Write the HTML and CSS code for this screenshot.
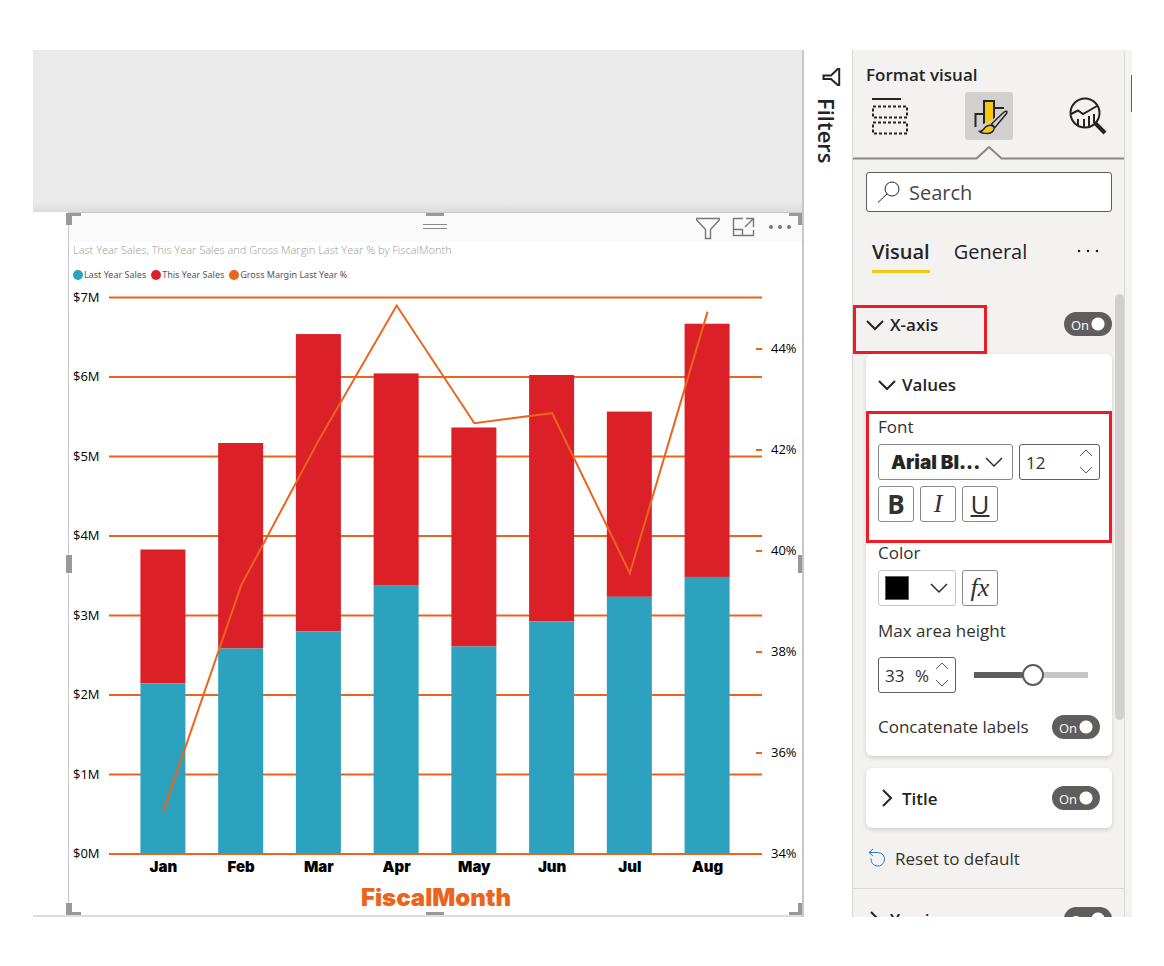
FILE: index.html
```html
<!DOCTYPE html>
<html lang="en">
<head>
    <meta charset="UTF-8">
    <meta name="viewport" content="width=device-width, initial-scale=1.0">
    <title>Format visual</title>
    <link rel="stylesheet" href="styles.css">
</head>
<body>

    <div class="workspace">
        <main class="canvas">
            <div class="backdrop"></div>
            <div class="report">
                <section class="visual">
                    <span class="handle top-left"></span>
                    <span class="handle top"></span>
                    <span class="handle top-right"></span>
                    <span class="handle left"></span>
                    <span class="handle right"></span>
                    <span class="handle bottom-left"></span>
                    <span class="handle bottom"></span>
                    <span class="handle bottom-right"></span>

                    <header class="visual-header">
                        <span class="grip"></span>
                        <div class="visual-actions">
                            <button aria-label="Filters">
                                <svg width="24" height="24" viewBox="0 0 24 24"><path d="M.7 2.500h22.600v1.500l-8.800 9.500v9h-5v-9L.7 4z"/></svg>
                            </button>
                            <button aria-label="Focus mode">
                                <svg width="24" height="22" viewBox="0 0 24 22"><path d="M11 1.500H1.500V18.500H21.500V13M21.500 10V1.500H14M1.500 12.500H10.500V18.500M13 10L21 2"/></svg>
                            </button>
                            <button aria-label="More options">
                                <svg class="dots" width="24" height="6" viewBox="0 0 24 6"><circle cx="3" cy="2" r="2"/><circle cx="12" cy="2" r="2"/><circle cx="21" cy="2" r="2"/></svg>
                            </button>
                        </div>
                    </header>

                    <h1 class="chart-title">Last Year Sales, This Year Sales and Gross Margin Last Year % by FiscalMonth</h1>
                    <ul class="legend">
                        <li><span class="dot last-year"></span>Last Year Sales</li>
                        <li><span class="dot this-year"></span>This Year Sales</li>
                        <li><span class="dot margin"></span>Gross Margin Last Year %</li>
                    </ul>
                    <svg id="chart" class="chart" viewBox="0 0 733 627" role="img" aria-label="Sales by FiscalMonth"></svg>
                </section>
            </div>
        </main>

        <aside class="filters">
            <button class="filters-toggle">
                <svg width="20" height="20" viewBox="0 0 20 20"><path d="M18.200 2v16h-1.500l-6.700-6H2.500V8.500H10L16.700 2z"/></svg>
                <span>Filters</span>
            </button>
        </aside>

        <aside class="pane">
            <div class="pane-body">
                <h2>Format visual</h2>
                <div class="modes">
                    <button class="mode" aria-label="Build visual">
                        <svg width="40" height="40" viewBox="0 0 40 40" fill="none" stroke="#252423" stroke-width="2"><path d="M2 3H31"/><path stroke-dasharray="3 2" d="M3 10.500H37V21.500H3zM3 26.500H37V37.500H3z"/></svg>
                    </button>
                    <button class="mode active" aria-label="Format visual">
                        <svg width="40" height="40" viewBox="0 0 40 40">
                            <path d="M6.500 31V18H15M25 12H35" fill="none" stroke-width="2"/>
                            <path fill="#f2c811" stroke-width="2" d="M15 33V5H25V33z"/>
                            <path fill="#d2d0ce" stroke="#d2d0ce" stroke-width="5" d="M37 16L22 28L16 30L11 35L18 37L25 34L38 17z"/>
                            <path fill="#d2d0ce" stroke-width="1.500" d="M22.500 28L34.500 16.500C36.500 15 39 14.500 37.500 17.500L26 31.500z"/>
                            <path fill="#f2c811" stroke-width="1.500" d="M10.500 35.500C14 35.500 14.500 33 16.500 31C19 28.500 23 28.500 25 31C26 34 23 37.500 18.500 37.500C15 37.500 12 37 10.500 35.500z"/>
                        </svg>
                    </button>
                    <button class="mode" aria-label="Analytics">
                        <svg width="40" height="40" viewBox="0 0 40 40" stroke-width="2"><circle cx="17" cy="17" r="14.500"/><path d="M3 18L10 14.500L15 18L29 10M10 29V23M16 31V23M21 31V20M26 27V18"/><path stroke-width="4" d="M27 27L37 37"/></svg>
                    </button>
                </div>
                <svg class="notch" viewBox="0 0 271 14" preserveAspectRatio="xMidYMid slice"><path d="M-400 12.500H123.500L136 1L148.500 12.500H700"/></svg>

                <label class="search">
                    <svg width="24" height="24" viewBox="0 0 24 24"><circle cx="15" cy="9" r="7"/><path d="M10 14L1 22.500"/></svg>
                    <input type="text" placeholder="Search" aria-label="Search">
                </label>

                <nav class="tabs">
                    <a href="#visual" class="active">Visual</a>
                    <a href="#general">General</a>
                    <button aria-label="More"><svg class="dots" width="24" height="4" viewBox="0 0 24 4"><circle cx="2" cy="2" r="1.300"/><circle cx="11" cy="2" r="1.300"/><circle cx="20" cy="2" r="1.300"/></svg></button>
                </nav>

                <div class="section-row">
                    <button class="section-title marked">
                        <svg class="chevron" viewBox="0 0 18 18"><path d="M1 5L9 13L17 5"/></svg>X-axis
                    </button>
                    <label class="switch"><input type="checkbox" checked aria-label="X-axis"><span>On</span></label>
                </div>

                <div class="card values">
                    <button class="card-title">
                        <svg class="chevron" viewBox="0 0 18 18"><path d="M1 5L9 13L17 5"/></svg>Values
                    </button>
                    <div class="font-group">
                        <label for="font">Font</label>
                        <div class="controls">
                            <div class="select-box">
                                <select id="font"><option>Arial Bl...</option></select>
                                <svg class="chevron thin" viewBox="0 0 18 18"><path d="M1 5L9 13L17 5"/></svg>
                            </div>
                            <div class="spin size">
                                <input type="text" value="12" aria-label="Font size">
                                <svg width="14" height="28" viewBox="0 0 14 28"><path d="M1 8L7 2L13 8M1 19L7 25L13 19"/></svg>
                            </div>
                        </div>
                        <div class="controls">
                            <button class="square bold">B</button>
                            <button class="square italic">I</button>
                            <button class="square underline">U</button>
                        </div>
                    </div>
                    <div class="field">
                        <label for="color">Color</label>
                        <div class="controls">
                            <button id="color" class="color">
                                <span class="swatch"></span>
                                <svg class="chevron thin" viewBox="0 0 18 18"><path d="M1 5L9 13L17 5"/></svg>
                            </button>
                            <button class="square fx">fx</button>
                        </div>
                    </div>
                    <div class="field area">
                        <label for="area">Max area height</label>
                        <div class="controls">
                            <div class="spin percent">
                                <input id="area" type="text" value="33"><span>%</span>
                                <svg width="14" height="28" viewBox="0 0 14 28"><path d="M1 8L7 2L13 8M1 19L7 25L13 19"/></svg>
                            </div>
                            <input class="slider" type="range" min="0" max="100" value="52" aria-label="Max area height">
                        </div>
                    </div>
                    <div class="switch-row">
                        <label for="concat">Concatenate labels</label>
                        <label class="switch"><input id="concat" type="checkbox" checked><span>On</span></label>
                    </div>
                </div>

                <div class="card title-card">
                    <button class="card-title">
                        <svg class="chevron" viewBox="0 0 18 18"><path d="M5 1L13 9L5 17"/></svg>Title
                    </button>
                    <label class="switch"><input type="checkbox" checked aria-label="Title"><span>On</span></label>
                </div>

                <button class="reset">
                    <svg width="18" height="20" viewBox="0 0 18 20"><path d="M5 1L1 4.500L5 8M1 4.500H10.500A6.800 6.800 0 1 1 3 10.500"/></svg>
                    Reset to default
                </button>

                <div class="section-row next">
                    <button class="section-title">
                        <svg class="chevron" viewBox="0 0 18 18"><path d="M5 1L13 9L5 17"/></svg>Y-axis
                    </button>
                    <label class="switch"><input type="checkbox" checked aria-label="Y-axis"><span>On</span></label>
                </div>
                <span class="scroll-thumb"></span>
            </div>
            <span class="edge-thumb"></span>
        </aside>
    </div>

    <script src="chart.js"></script>
</body>
</html>
```
FILE: styles.css
```css
* {
    box-sizing: border-box;
}

body {
    margin: 0;
    background: #fff;
    color: #252423;
    font-family: "Open Sans", "Noto Sans", sans-serif;
    font-size: 17px;
}

button {
    padding: 0;
    border: none;
    background: none;
    color: inherit;
    font: inherit;
    cursor: pointer;
}

svg {
    display: block;
    flex: none;
    fill: none;
    stroke: #252423;
}

.workspace {
    display: flex;
    height: calc(100vh - 99px);
    margin: 50px 32px 0 33px;
    overflow: hidden;
}

/* report canvas */
.canvas {
    display: flex;
    flex: 1;
    flex-direction: column;
    min-width: 0;
    border-right: 2px solid #c8c8c8;
}

.backdrop {
    height: 162px;
    background: linear-gradient(#eaeaea 94%, #dcdcdc);
}

.report {
    flex: 1;
    padding-left: 35px;
    border-bottom: 2px solid #dcdcdc;
}

.visual {
    position: relative;
    height: 100%;
    border-top: 1px solid #c8c8c8;
    border-left: 1px solid #c8c8c8;
}

.visual-header {
    position: relative;
    display: flex;
    justify-content: flex-end;
    height: 29px;
    padding-right: 10px;
    background: #fafafa;
}

.grip {
    position: absolute;
    top: 11px;
    left: calc(50% - 13px);
    width: 24px;
    height: 5px;
    border-top: 1px solid #888;
    border-bottom: 1px solid #888;
}

.visual-actions {
    display: flex;
    align-items: center;
    gap: 12px;
}

.visual-actions svg {
    stroke: #777;
    stroke-width: 1.4;
}

.visual-actions .dots {
    fill: #777;
    stroke: none;
}

.handle {
    position: absolute;
    z-index: 1;
    border: 0 solid #999;
}

.top-left, .top-right, .bottom-left, .bottom-right {
    width: 13px;
    height: 12px;
}

.top-left, .bottom-left {
    left: -3px;
    width: 15px;
    border-left-width: 6px;
}

.top-right, .bottom-right {
    right: 0;
    border-right-width: 4px;
}

.top-left, .top-right {
    top: 0;
    border-top-width: 3px;
}

.bottom-left, .bottom-right {
    bottom: 0;
    border-bottom-width: 3px;
}

.top, .bottom {
    left: calc(50% - 10px);
    width: 18px;
    border-top-width: 3px;
}

.top {
    top: 0;
}

.bottom {
    bottom: 0;
}

.left, .right {
    top: calc(50% - 9px);
    height: 18px;
}

.left {
    left: -3px;
    border-left-width: 6px;
}

.right {
    right: 0;
    border-right-width: 4px;
}

.chart-title {
    margin: 0;
    padding-left: 4px;
    color: #999;
    font-size: 11px;
    font-weight: 300;
    line-height: 16px;
}

.legend {
    display: flex;
    gap: 5px;
    margin: 0;
    padding: 10px 0 4px 4px;
    color: #555;
    font-family: "Noto Sans", sans-serif;
    font-size: 9px;
    line-height: 14px;
    list-style: none;
}

.legend li {
    display: flex;
    align-items: center;
    gap: 1px;
}

.dot {
    width: 10px;
    height: 10px;
    border-radius: 50%;
}

.last-year {
    background: #2ca2bf;
}

.this-year {
    background: #db2028;
}

.margin {
    background: #eb641c;
}

.chart {
    width: 100%;
}

.chart text {
    fill: #000;
    stroke: none;
    font-size: 13px;
}

.chart .grid {
    stroke: #eb641c;
    stroke-width: 2;
}

.chart .bar-last {
    fill: #2ca2bf;
    stroke: none;
}

.chart .bar-this {
    fill: #db2028;
    stroke: none;
}

.chart .line {
    stroke: #eb641c;
    stroke-width: 2;
}

.chart .month {
    font-family: Inter, sans-serif;
    font-size: 15px;
    font-weight: 900;
    text-anchor: middle;
}

.chart .axis-title {
    fill: #eb641c;
    font-family: Inter, sans-serif;
    font-size: 24px;
    font-weight: 900;
    text-anchor: middle;
}

/* collapsed filters pane */
.filters {
    width: 48px;
    padding: 17px 0 0 8px;
}

.filters-toggle {
    display: flex;
    flex-direction: column;
    align-items: center;
    gap: 11px;
}

.filters-toggle svg {
    margin-left: 8px;
    stroke-width: 2;
}

.filters-toggle span {
    font-size: 22px;
    font-weight: 600;
    line-height: 30px;
    writing-mode: vertical-rl;
}

/* format pane */
.pane {
    position: relative;
    width: 280px;
    padding-right: 7px;
    border-left: 1px solid #d8d8d8;
    background: #f3f2f1;
}

.pane-body {
    position: relative;
    height: 100%;
    border-right: 1px solid #d8d8d8;
    overflow: hidden;
}

.pane h2 {
    margin: 0;
    padding: 13px 13px 5px;
    font-size: 17px;
    font-weight: 600;
    line-height: 24px;
}

.modes {
    display: flex;
    justify-content: space-between;
    padding: 0 12px 0 13px;
}

.mode {
    display: flex;
    align-items: center;
    justify-content: center;
    width: 48px;
    height: 48px;
    border-radius: 3px;
}

.mode.active {
    background: #d2d0ce;
}

.notch {
    width: 100%;
    height: 14px;
    margin: 6px 0 12px;
    stroke: #8a8886;
    stroke-width: 2;
}

.search {
    display: flex;
    align-items: center;
    gap: 8px;
    height: 40px;
    margin: 0 12px 0 13px;
    padding: 0 10px;
    border: 1px solid #605e5c;
    border-radius: 3px;
    background: #fff;
}

.search input {
    width: 100%;
    min-width: 0;
    padding: 0;
    border: none;
    outline: none;
    background: none;
    font: inherit;
    font-size: 20px;
}

.search input::placeholder {
    color: #484644;
    opacity: 1;
}

.tabs {
    display: flex;
    gap: 24px;
    margin: 22px 23px 0 19px;
    font-size: 20px;
    line-height: 36px;
}

.tabs a {
    height: 39px;
    color: #252423;
    text-decoration: none;
}

.tabs .active {
    border-bottom: 3px solid #f2c811;
    font-weight: 600;
}

.tabs button {
    height: 34px;
    margin-left: auto;
}

.tabs .dots {
    fill: #252423;
    stroke: none;
}

.section-row {
    display: flex;
    align-items: flex-start;
    justify-content: space-between;
    margin-top: 32px;
    padding-right: 12px;
}

.section-row .switch {
    margin-top: 7px;
}

.section-title {
    display: flex;
    align-items: center;
    gap: 6px;
    height: 49px;
    padding: 0 46px 10px 10px;
    border: 3px solid transparent;
    font-weight: 600;
}

.section-title.marked {
    border-color: #ed1c24;
}

.chevron {
    width: 18px;
    height: 18px;
    stroke-width: 2;
}

.chevron.thin {
    stroke-width: 1.4;
}

.switch {
    position: relative;
    display: flex;
    width: 48px;
    height: 24px;
}

.switch input {
    width: 48px;
    height: 24px;
    margin: 0;
    border-radius: 12px;
    background: radial-gradient(circle at 34px 12px, #fff 6px, #605e5c 7px);
    appearance: none;
}

.switch span {
    position: absolute;
    left: 7px;
    color: #fff;
    font-size: 13px;
    line-height: 26px;
}

.card {
    margin: 0 12px 12px 13px;
    border-radius: 6px;
    background: #fff;
    box-shadow: 0 2px 4px rgba(0, 0, 0, 0.15);
}

.values {
    padding-bottom: 17px;
    color: #323130;
}

.card-title {
    display: flex;
    align-items: center;
    gap: 6px;
    padding-left: 12px;
    color: #252423;
    font-weight: 600;
}

.values .card-title {
    height: 57px;
    padding-top: 4px;
}

.font-group {
    height: 132px;
    padding: 2px 9px;
    border: 3px solid #ed1c24;
}

.font-group label, .field label {
    display: block;
    line-height: 22px;
}

.controls {
    display: flex;
    gap: 6px;
    margin-top: 6px;
}

.select-box {
    position: relative;
    flex: 1;
}

.select-box select {
    width: 100%;
    height: 36px;
    padding: 0 0 0 12px;
    border: 1px solid #8a8886;
    border-radius: 3px;
    background: #fff;
    color: #252423;
    font-family: Inter, sans-serif;
    font-size: 19px;
    font-weight: 900;
    appearance: none;
}

.select-box svg {
    position: absolute;
    top: 9px;
    right: 10px;
    pointer-events: none;
}

.spin {
    display: flex;
    align-items: center;
    justify-content: space-between;
    height: 36px;
    padding: 0 6px;
    border: 1px solid #605e5c;
    border-radius: 3px;
    background: #fff;
}

.spin svg {
    stroke: #605e5c;
}

.spin input {
    width: 24px;
    padding: 0;
    border: none;
    background: none;
    color: #323130;
    font: inherit;
}

.size {
    width: 81px;
}

.percent {
    width: 78px;
}

.square {
    width: 36px;
    height: 36px;
    border: 1px solid #8a8886;
    border-radius: 3px;
    font-size: 26px;
    line-height: 32px;
}

.bold {
    font-weight: 700;
}

.italic, .fx {
    font-family: "Liberation Serif", serif;
    font-style: italic;
}

.underline {
    text-decoration: underline;
    text-decoration-thickness: 2px;
}

.field {
    padding: 0 12px;
}

.font-group + .field {
    margin-top: -1px;
}

.color {
    display: flex;
    align-items: center;
    justify-content: space-between;
    width: 78px;
    height: 36px;
    padding: 0 7px 0 6px;
    border: 1px solid #c8c6c4;
    border-radius: 3px;
}

.swatch {
    width: 24px;
    height: 24px;
    border: 1px solid #605e5c;
    background: #000;
}

.area {
    padding-top: 14px;
}

.area .controls {
    gap: 18px;
    align-items: center;
    margin-top: 15px;
}

.slider {
    flex: 1;
    min-width: 0;
    height: 22px;
    margin: 0 12px 0 0;
    background: linear-gradient(90deg, #605e5c 52%, #c8c6c4 52%) center / 100% 6px no-repeat;
    appearance: none;
}

.slider::-webkit-slider-thumb {
    width: 22px;
    height: 22px;
    border: 2px solid #605e5c;
    border-radius: 50%;
    background: #fff;
    appearance: none;
}

.switch-row {
    display: flex;
    align-items: center;
    justify-content: space-between;
    padding: 22px 12px 0;
    line-height: 24px;
}

.title-card {
    display: flex;
    align-items: center;
    justify-content: space-between;
    height: 60px;
    padding-right: 12px;
}

.reset {
    display: flex;
    align-items: center;
    gap: 9px;
    height: 36px;
    margin-top: 12px;
    padding-left: 15px;
    color: #323130;
}

.reset svg {
    stroke: #2b7cc0;
}

.section-row.next {
    margin-top: 12px;
    padding-top: 11px;
    border-top: 1px solid #d8d8d8;
}

.scroll-thumb {
    position: absolute;
    top: 244px;
    right: 0;
    width: 9px;
    height: 426px;
    border-radius: 5px;
    background: #d2d0ce;
}

.edge-thumb {
    position: absolute;
    top: 25px;
    right: 0;
    width: 1px;
    height: 37px;
    background: #605e5c;
}
```
FILE: chart.js
```js
// sales in $M, margin in %
const data = [
    { month: "Jan", last: 2.145, total: 3.83, margin: 34.85 },
    { month: "Feb", last: 2.585, total: 5.17, margin: 39.32 },
    { month: "Mar", last: 2.80, total: 6.54, margin: 42.2 },
    { month: "Apr", last: 3.375, total: 6.045, margin: 44.86 },
    { month: "May", last: 2.61, total: 5.365, margin: 42.53 },
    { month: "Jun", last: 2.925, total: 6.025, margin: 42.73 },
    { month: "Jul", last: 3.235, total: 5.565, margin: 39.56 },
    { month: "Aug", last: 3.485, total: 6.67, margin: 44.74 }
];

const left = 40;
const right = 693;
const bottom = 568;
const slot = (right - left) / 8.4;
const barWidth = 45;

const salesY = value => bottom - value * 79.5;
const marginY = value => bottom - (value - 34) * 50.5;
const monthX = index => left + slot * (index + 0.7);

let shapes = "";

for (let m = 0; m <= 7; m++) {
    const y = salesY(m);
    shapes += `<line class="grid" x1="${left}" x2="${right}" y1="${y}" y2="${y}"/>`;
    shapes += `<text x="4" y="${y + 4}">$${m}M</text>`;
}

for (let p = 34; p <= 44; p += 2) {
    const y = marginY(p);
    shapes += `<line class="grid" x1="${right - 6}" x2="${right}" y1="${y}" y2="${y}"/>`;
    shapes += `<text x="702" y="${y + 4}">${p}%</text>`;
}

data.forEach((d, i) => {
    const x = monthX(i) - 23;
    const base = bottom - 1;
    shapes += `<rect class="bar-this" x="${x}" y="${salesY(d.total)}" width="${barWidth}" height="${salesY(d.last) - salesY(d.total)}"/>`;
    shapes += `<rect class="bar-last" x="${x}" y="${salesY(d.last)}" width="${barWidth}" height="${base - salesY(d.last)}"/>`;
    shapes += `<text class="month" x="${monthX(i)}" y="586">${d.month}</text>`;
});

const points = data.map((d, i) => `${monthX(i)},${marginY(d.margin)}`).join(" ");
shapes += `<polyline class="line" points="${points}"/>`;
shapes += `<text class="axis-title" x="367" y="620">FiscalMonth</text>`;

document.getElementById("chart").innerHTML = shapes;
```
